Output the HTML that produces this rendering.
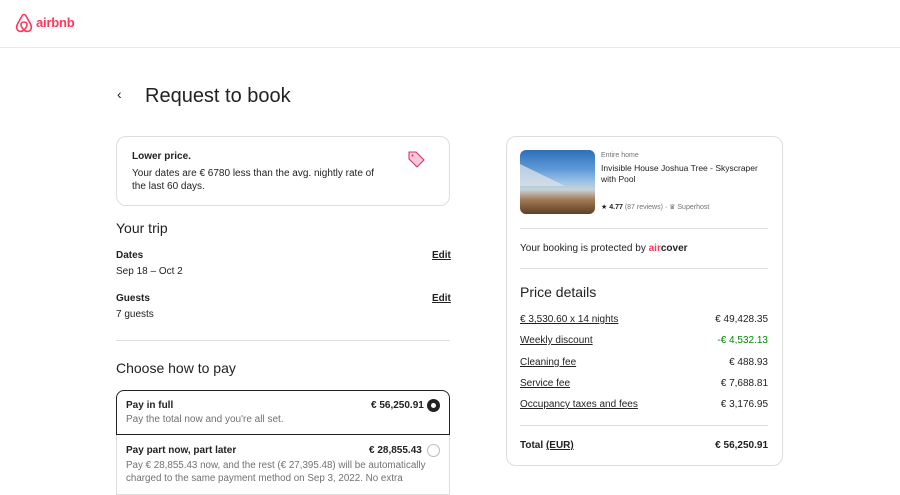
<!DOCTYPE html>
<html><head><meta charset="utf-8"><style>
*{box-sizing:border-box;margin:0;padding:0}
body{width:900px;height:484px;overflow:hidden;background:#fff;font-family:"Liberation Sans",sans-serif;color:#222;position:relative}
.a{position:absolute}
.hdr{left:0;top:0;width:900px;height:48px;border-bottom:1px solid #ebebeb}
.t{font-size:10px}
.g{color:#717171}
.u{text-decoration:underline}
.b{font-weight:bold}
.box{border:1px solid #ddd;border-radius:10px}
.hr{height:1px;background:#ddd}
.pr{position:absolute;font-size:10px;left:520px;width:248px;display:flex;justify-content:space-between}
</style></head><body>
<div class="a hdr"></div>
<svg class="a" style="left:14px;top:13px" width="20" height="21" viewBox="0 0 20 21"><path d="M10 17c-2 2-6 2-7-1-1-2 0-4 1-6l4-7c1-2 3-2 4 0l4 7c1 2 2 4 1 6-1 3-5 3-7 1zm0 0c-2-2-3-4-3-5 0-2 1-3 3-3s3 1 3 3c0 1-1 3-3 5z" fill="none" stroke="#ff385c" stroke-width="1.6"/></svg>
<div class="a b" style="left:36px;top:15px;font-size:13px;color:#ff385c;letter-spacing:-0.2px">airbnb</div>
<div class="a" style="left:117px;top:86px;font-size:14px">&#8249;</div>
<div class="a" style="left:145px;top:85px;font-size:20px">Request to book</div>

<div class="a box" style="left:116px;top:136px;width:334px;height:70px"></div>
<div class="a b" style="left:132px;top:151px;font-size:10px">Lower price.</div>
<div class="a" style="left:132px;top:167px;font-size:10px;line-height:13px;width:255px">Your dates are € 6780 less than the avg. nightly rate of the last 60 days.</div>
<svg class="a" style="left:405px;top:149px" width="22" height="22" viewBox="0 0 22 22"><path d="M4 3h7l8 8-7 7-8-8z" fill="#f9c8d8" stroke="#d6336c" stroke-width="1.1" stroke-linejoin="round"/><circle cx="7.5" cy="6.5" r="1" fill="#d6336c"/></svg>

<div class="a" style="left:116px;top:220px;font-size:14px">Your trip</div>
<div class="a b t" style="left:116px;top:250px">Dates</div>
<div class="a t" style="left:116px;top:266px">Sep 18 – Oct 2</div>
<div class="a b t u" style="left:432px;top:250px">Edit</div>
<div class="a b t" style="left:116px;top:293px">Guests</div>
<div class="a t" style="left:116px;top:309px">7 guests</div>
<div class="a b t u" style="left:432px;top:293px">Edit</div>
<div class="a hr" style="left:116px;top:340px;width:334px"></div>
<div class="a" style="left:116px;top:360px;font-size:14px">Choose how to pay</div>

<div class="a" style="left:116px;top:390px;width:334px;height:45px;border:1.5px solid #222;border-radius:8px 8px 0 0"></div>
<div class="a b t" style="left:126px;top:400px">Pay in full</div>
<div class="a t g" style="left:126px;top:414px">Pay the total now and you're all set.</div>
<div class="a b t" style="left:371px;top:400px">€ 56,250.91</div>
<div class="a" style="left:427px;top:399px;width:13px;height:13px;border-radius:50%;background:#222"></div>
<div class="a" style="left:431px;top:403px;width:5px;height:5px;border-radius:50%;background:#fff"></div>
<div class="a" style="left:116px;top:435px;width:334px;height:60px;border:1px solid #ddd;border-top:none"></div>
<div class="a b t" style="left:126px;top:445px">Pay part now, part later</div>
<div class="a b t" style="left:369px;top:445px">€ 28,855.43</div>
<div class="a" style="left:427px;top:444px;width:13px;height:13px;border-radius:50%;border:1px solid #bbb"></div>
<div class="a t g" style="left:126px;top:459px;line-height:13px;width:305px;font-size:9.8px">Pay € 28,855.43 now, and the rest (€ 27,395.48) will be automatically charged to the same payment method on Sep 3, 2022. No extra</div>

<div class="a box" style="left:506px;top:136px;width:277px;height:330px"></div>
<div class="a" style="left:520px;top:150px;width:75px;height:64px;border-radius:6px;overflow:hidden;background:linear-gradient(180deg,#2f6fb8 0%,#5d9ad6 30%,#9cc3e6 50%,#c7d2d6 62%,#a07a55 78%,#5e3e24 100%)"><div style="position:absolute;left:0;top:14px;width:0;height:0;border-right:45px solid transparent;border-bottom:22px solid rgba(220,225,230,.75)"></div></div>
<div class="a" style="left:601px;top:152px;font-size:7px;color:#717171">Entire home</div>
<div class="a" style="left:601px;top:163px;font-size:8.5px;line-height:11px;width:170px">Invisible House Joshua Tree - Skyscraper with Pool</div>
<div class="a" style="left:601px;top:203px;font-size:7px">★ <b>4.77</b> <span class="g">(87 reviews)</span> · <span class="g">♛ Superhost</span></div>
<div class="a hr" style="left:520px;top:228px;width:248px"></div>
<div class="a t" style="left:520px;top:243px">Your booking is protected by <b style="color:#ff385c">air</b><b>cover</b></div>
<div class="a hr" style="left:520px;top:268px;width:248px"></div>
<div class="a" style="left:520px;top:284px;font-size:14px">Price details</div>
<div class="pr" style="top:314px"><span class="u">€ 3,530.60 x 14 nights</span><span>€ 49,428.35</span></div>
<div class="pr" style="top:335px"><span class="u">Weekly discount</span><span style="color:#008a05">-€ 4,532.13</span></div>
<div class="pr" style="top:357px"><span class="u">Cleaning fee</span><span>€ 488.93</span></div>
<div class="pr" style="top:378px"><span class="u">Service fee</span><span>€ 7,688.81</span></div>
<div class="pr" style="top:399px"><span class="u">Occupancy taxes and fees</span><span>€ 3,176.95</span></div>
<div class="a hr" style="left:520px;top:425px;width:248px"></div>
<div class="pr b" style="top:440px"><span>Total <span class="u">(EUR)</span></span><span>€ 56,250.91</span></div>
</body></html>
